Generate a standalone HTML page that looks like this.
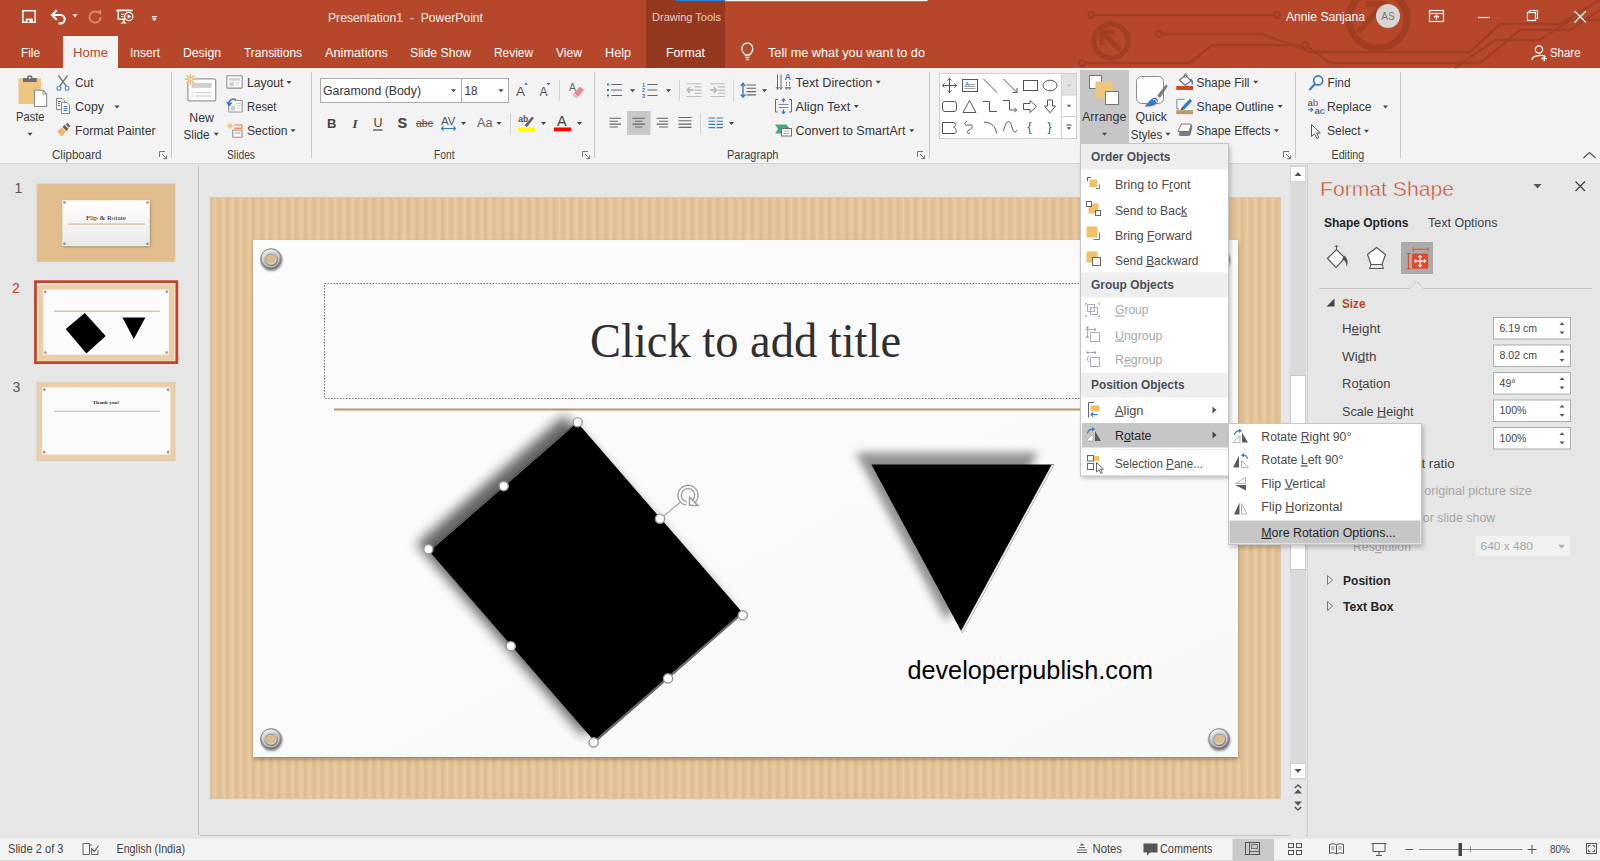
<!DOCTYPE html>
<html><head><meta charset="utf-8"><title>Presentation1 - PowerPoint</title>
<style>
*{box-sizing:border-box;margin:0;padding:0}
html,body{width:1600px;height:861px;overflow:hidden;background:#e6e6e6}
svg{position:absolute;left:0;top:0;display:block;font-family:"Liberation Sans",sans-serif;font-size:12px}
text{white-space:pre}
</style></head><body>
<svg width="1600" height="861" viewBox="0 0 1600 861">
<defs>
<linearGradient id="cardg" x1="0" y1="0" x2="1" y2="0"><stop offset="0" stop-color="#ddba8d"/><stop offset="0.3" stop-color="#e3c298"/><stop offset="0.6" stop-color="#e8cca4"/><stop offset="0.85" stop-color="#e3c298"/><stop offset="1" stop-color="#ddba8d"/></linearGradient>
<pattern id="card" x="210" y="0" width="8.6" height="8" patternUnits="userSpaceOnUse">
<rect width="8.6" height="8" fill="url(#cardg)"/>
</pattern>
<pattern id="cardS" x="0" y="0" width="3" height="3" patternUnits="userSpaceOnUse">
<rect width="3" height="3" fill="#e6c497"/>
</pattern>
<filter id="sh" x="-20%" y="-20%" width="140%" height="140%"><feGaussianBlur stdDeviation="3"/></filter>
<filter id="sh5" x="-30%" y="-30%" width="160%" height="160%"><feGaussianBlur stdDeviation="5"/></filter>
<filter id="sh4" x="-30%" y="-30%" width="160%" height="160%"><feGaussianBlur stdDeviation="4"/></filter>
<filter id="sh6" x="-30%" y="-30%" width="160%" height="160%"><feGaussianBlur stdDeviation="6"/></filter>
<filter id="sh2" x="-20%" y="-20%" width="140%" height="140%"><feGaussianBlur stdDeviation="2"/></filter>
<filter id="sh1" x="-20%" y="-20%" width="140%" height="140%"><feGaussianBlur stdDeviation="1"/></filter>
<linearGradient id="paper" x1="0" y1="0" x2="1" y2="1"><stop offset="0" stop-color="#fcfcfc"/><stop offset="1" stop-color="#f8f8f8"/></linearGradient>
<linearGradient id="grom" x1="0.3" y1="0" x2="0.7" y2="1"><stop offset="0" stop-color="#f4f4f4"/><stop offset="0.45" stop-color="#b4b4b4"/><stop offset="1" stop-color="#6a6a6a"/></linearGradient>
<linearGradient id="grom2" x1="0.3" y1="0" x2="0.7" y2="1"><stop offset="0" stop-color="#8a8a8a"/><stop offset="1" stop-color="#e8e8e8"/></linearGradient>
<linearGradient id="thumbpaper" x1="0" y1="0" x2="0" y2="1"><stop offset="0" stop-color="#ffffff"/><stop offset="1" stop-color="#e9e9e9"/></linearGradient>
</defs>
<rect x="0" y="0" width="1600" height="861" fill="#e6e6e6" />
<rect x="0" y="0" width="1600" height="68" fill="#b7472a" />
<rect x="0" y="68" width="1600" height="95" fill="#f3f3f3" />
<line x1="0" y1="163.5" x2="1600" y2="163.5" stroke="#d4d4d4" stroke-width="1" />
<rect x="0" y="838" width="1600" height="23" fill="#f3f3f3" />
<line x1="0" y1="838" x2="1600" y2="838" stroke="#e0e0e0" stroke-width="1" />
<line x1="198.5" y1="166" x2="198.5" y2="835" stroke="#c3c3c3" stroke-width="1" />
<line x1="200" y1="835.5" x2="1307" y2="835.5" stroke="#c3c3c3" stroke-width="1" />
<line x1="0" y1="860.5" x2="1600" y2="860.5" stroke="#d6d6d6" stroke-width="1" />
<rect x="210.3" y="197.5" width="1070.2" height="601.3" fill="url(#card)" />
<rect x="210.3" y="197.5" width="1070.2" height="601.3" fill="none" stroke="#d4c5ae" stroke-width="0.8" />
<rect x="254" y="243" width="984" height="516" fill="#5a4020" opacity="0.55" filter="url(#sh2)"/>
<rect x="253" y="240" width="985" height="517" fill="url(#paper)" />
<circle cx="271.5" cy="260.2" r="10.9" fill="#000" opacity="0.4" filter="url(#sh1)"/>
<circle cx="271" cy="259" r="10.3" fill="url(#grom)" stroke="#7c7c7c" stroke-width="0.9" />
<circle cx="271" cy="259" r="7.9" fill="none" stroke="#f2f2f2" stroke-width="1.2" opacity="0.55"/>
<circle cx="271" cy="259" r="5.6" fill="url(#grom2)" />
<circle cx="271" cy="259" r="4.5" fill="#dcbb8c" />
<circle cx="1219.5" cy="260.2" r="10.9" fill="#000" opacity="0.4" filter="url(#sh1)"/>
<circle cx="1219" cy="259" r="10.3" fill="url(#grom)" stroke="#7c7c7c" stroke-width="0.9" />
<circle cx="1219" cy="259" r="7.9" fill="none" stroke="#f2f2f2" stroke-width="1.2" opacity="0.55"/>
<circle cx="1219" cy="259" r="5.6" fill="url(#grom2)" />
<circle cx="1219" cy="259" r="4.5" fill="#dcbb8c" />
<circle cx="271.5" cy="740.2" r="10.9" fill="#000" opacity="0.4" filter="url(#sh1)"/>
<circle cx="271" cy="739" r="10.3" fill="url(#grom)" stroke="#7c7c7c" stroke-width="0.9" />
<circle cx="271" cy="739" r="7.9" fill="none" stroke="#f2f2f2" stroke-width="1.2" opacity="0.55"/>
<circle cx="271" cy="739" r="5.6" fill="url(#grom2)" />
<circle cx="271" cy="739" r="4.5" fill="#dcbb8c" />
<circle cx="1219.5" cy="740.2" r="10.9" fill="#000" opacity="0.4" filter="url(#sh1)"/>
<circle cx="1219" cy="739" r="10.3" fill="url(#grom)" stroke="#7c7c7c" stroke-width="0.9" />
<circle cx="1219" cy="739" r="7.9" fill="none" stroke="#f2f2f2" stroke-width="1.2" opacity="0.55"/>
<circle cx="1219" cy="739" r="5.6" fill="url(#grom2)" />
<circle cx="1219" cy="739" r="4.5" fill="#dcbb8c" />
<rect x="324.5" y="283.5" width="842" height="115" fill="none" stroke="#6f6f6f" stroke-width="1" stroke-dasharray="1.5 1.5"/>
<text x="590" y="356.5" font-size="48" fill="#303030" textLength="311" lengthAdjust="spacingAndGlyphs" font-family='"Liberation Serif", serif' >Click to add title</text>
<line x1="334" y1="409.5" x2="1156" y2="409.5" stroke="#b89a6c" stroke-width="2" />
<g transform="translate(586 582) rotate(49)" >
<rect x="-140" y="-93" width="254" height="196" fill="#000" opacity="0.6" filter="url(#sh6)"/>
<rect x="-127" y="-98" width="254" height="196" fill="#000" />
<rect x="-127" y="-98" width="1.3" height="196" fill="#6a6a6a" />
<rect x="125" y="-98" width="2" height="196" fill="#6e6e6e" />
</g>
<line x1="660.7" y1="518.4" x2="680" y2="502.5" stroke="#a0a0a0" stroke-width="1.1" />
<circle cx="577.7" cy="422.2" r="4.6" fill="#fff" stroke="#989898" stroke-width="1.4" />
<circle cx="428.4" cy="549.2" r="4.6" fill="#fff" stroke="#989898" stroke-width="1.4" />
<circle cx="742.8" cy="615.3" r="4.6" fill="#fff" stroke="#989898" stroke-width="1.4" />
<circle cx="593.6" cy="742.4" r="4.6" fill="#fff" stroke="#989898" stroke-width="1.4" />
<circle cx="503.7" cy="486.1" r="4.6" fill="#fff" stroke="#989898" stroke-width="1.4" />
<circle cx="660" cy="518.7" r="4.6" fill="#fff" stroke="#989898" stroke-width="1.4" />
<circle cx="510.8" cy="646.2" r="4.6" fill="#fff" stroke="#989898" stroke-width="1.4" />
<circle cx="668" cy="678.4" r="4.6" fill="#fff" stroke="#989898" stroke-width="1.4" />
<g transform="translate(688 495.3)" >
<path d="M-1.5 8.3 A8.4 8.4 0 1 1 6.3 5.6" fill="none" stroke="#9b9b9b" stroke-width="4.6" />
<path d="M0.8 0.5 L0.8 10.6 L11.6 11 L5.5 4.5 Z" fill="#9b9b9b" />
<path d="M-1.5 8.3 A8.4 8.4 0 1 1 6.3 5.6" fill="none" stroke="#fff" stroke-width="2" />
<path d="M2.2 3.5 L2.2 9.3 L8.3 9.6 Z" fill="#fff" />
</g>
<path d="M871.4 464.5 L1054.2 464.5 L962.3 633.3 Z" fill="#000" opacity="0.42" filter="url(#sh4)" transform="translate(-16 -12)"/>
<path d="M871.4 464.5 L1054.2 464.5 L962.3 633.3 Z" fill="#000" />
<path d="M1054.2 464.5 L962.3 633.3 L961 631 L1051.5 465 Z" fill="#e8e8e8" />
<text x="907.4" y="679.4" font-size="25.5" fill="#000" textLength="245.6" lengthAdjust="spacingAndGlyphs" >developerpublish.com</text>
<g  stroke="#9c3c23" fill="none" stroke-width="2.5" opacity="0.75">
<path d="M1094 15 H1274" fill="none" />
<circle cx="1091" cy="15" r="3" fill="none" />
<circle cx="1277" cy="15" r="3" fill="none" />
<path d="M1162 34 H1262 L1310 52 H1470 L1500 24 H1560 L1600 0" fill="none" />
<circle cx="1159" cy="34" r="3" fill="none" />
<path d="M1085 63 H1190 L1212 45 H1302" fill="none" />
<circle cx="1082" cy="63" r="3" fill="none" />
<circle cx="1305" cy="45" r="3" fill="none" />
<path d="M1308 47 L1330 63 H1480 L1520 30 H1570 L1600 10" fill="none" />
<circle cx="1111" cy="41" r="17" fill="none" stroke-width="5"/>
<path d="M1120 50 L1103 33 M1102 45 V32 H1115" fill="none" stroke-width="5"/>
<circle cx="1378" cy="19" r="29" fill="none" stroke-width="7"/>
<path d="M1366 4 H1384 V22 M1384 4 L1358 32" fill="none" stroke-width="6"/>
<path d="M1455 68 L1495 40 H1540 L1570 20 H1600" fill="none" />
</g>
<rect x="646" y="0" width="79" height="68" fill="#94391f" />
<rect x="676" y="0" width="49" height="1.2" fill="#2b7cd3" />
<rect x="725" y="0" width="202.5" height="1.2" fill="#f3f3f3" />
<text x="652" y="21" font-size="11.5" fill="#eecbbf" textLength="69" lengthAdjust="spacingAndGlyphs" >Drawing Tools</text>
<text x="328" y="21.5" font-size="12.5" fill="#fbeeea" textLength="155" lengthAdjust="spacingAndGlyphs" >Presentation1  -  PowerPoint</text>
<g  stroke="#fff" fill="none" stroke-width="1.6">
<path d="M22.8 10.8 H35.2 V22.2 H22.8 Z" fill="none" />
<rect x="25.8" y="18.6" width="7" height="3.8" fill="#fff" stroke="none"/>
<rect x="27.6" y="19.8" width="1.7" height="2.6" fill="#b7472a" stroke="none"/>
<path d="M52.5 15 H60.5 A4.2 4.2 0 0 1 60.5 23.4 H58.5" fill="none" stroke-width="2.1"/>
<path d="M56.8 10.3 L52 15 L56.8 19.7" fill="none" stroke-width="2.1"/>
</g>
<path d="M72.5 14.2 h5 l-2.5 3 z" fill="#ffffff" />
<g  stroke="#d98670" fill="none" stroke-width="2">
<path d="M100.7 17.3 A5.6 5.6 0 1 1 97.8 12.1" fill="none" />
</g>
<path d="M95.8 12.3 L101 9.2 L101.3 14.9 Z" fill="#d98670" />
<g  stroke="#fff" fill="none" stroke-width="1.4">
<path d="M116.3 10.4 H132.5" fill="none" stroke-width="1.7"/>
<path d="M118.3 10.7 V19.3 H125" fill="none" />
<path d="M121 14.2 H124.5 M121 16.5 H123.5" fill="none" stroke-width="0.9"/>
<path d="M123.7 19.5 V22" fill="none" stroke-width="1.6"/>
<path d="M120.3 23.6 L123.7 21.2 L127 23.6 Z" fill="#fff" stroke="none"/>
<circle cx="128.8" cy="16.5" r="4.1" fill="none" stroke-width="1.2" fill="#b7472a"/>
<path d="M127.6 14.2 V18.8 L131.3 16.5 Z" fill="#fff" stroke="none"/>
</g>
<rect x="151.9" y="16" width="4.8" height="1.3" fill="#ffffff" />
<path d="M151.925 18.175 h4.75 l-2.375 2.8499999999999996 z" fill="#ffffff" />
<text x="1286" y="21" font-size="12.5" fill="#ffffff" textLength="79" lengthAdjust="spacingAndGlyphs" >Annie Sanjana</text>
<circle cx="1388" cy="16" r="12" fill="#d9d5d3" />
<text x="1388" y="20" font-size="10" fill="#767676" text-anchor="middle" >AS</text>
<g  stroke="#fff" fill="none" stroke-width="1.2">
<rect x="1429.5" y="10.5" width="14" height="11" fill="none" />
<line x1="1429.5" y1="13.5" x2="1443.5" y2="13.5" stroke="#ffffff" stroke-width="1.2" />
<path d="M1436.5 20 V15.5 M1434 17.5 L1436.5 15.2 L1439 17.5" fill="none" />
<line x1="1478" y1="17.5" x2="1490" y2="17.5" stroke="#ffffff" stroke-width="1.2" />
<rect x="1527.5" y="12.5" width="8" height="8" fill="none" />
<path d="M1529.5 12.5 V10.5 H1537.5 V18.5 H1535.5" fill="none" />
<path d="M1574.5 11 L1586 22.5 M1586 11 L1574.5 22.5" fill="none" stroke-width="1.3"/>
</g>
<rect x="63" y="36" width="55" height="32" fill="#f3f3f3" />
<text x="21" y="56.5" font-size="12.5" fill="#ffffff" textLength="19" lengthAdjust="spacingAndGlyphs" >File</text>
<text x="130" y="56.5" font-size="12.5" fill="#ffffff" textLength="30" lengthAdjust="spacingAndGlyphs" >Insert</text>
<text x="183" y="56.5" font-size="12.5" fill="#ffffff" textLength="38" lengthAdjust="spacingAndGlyphs" >Design</text>
<text x="244" y="56.5" font-size="12.5" fill="#ffffff" textLength="58" lengthAdjust="spacingAndGlyphs" >Transitions</text>
<text x="325" y="56.5" font-size="12.5" fill="#ffffff" textLength="63" lengthAdjust="spacingAndGlyphs" >Animations</text>
<text x="410" y="56.5" font-size="12.5" fill="#ffffff" textLength="61" lengthAdjust="spacingAndGlyphs" >Slide Show</text>
<text x="494" y="56.5" font-size="12.5" fill="#ffffff" textLength="39" lengthAdjust="spacingAndGlyphs" >Review</text>
<text x="556" y="56.5" font-size="12.5" fill="#ffffff" textLength="26" lengthAdjust="spacingAndGlyphs" >View</text>
<text x="605" y="56.5" font-size="12.5" fill="#ffffff" textLength="26" lengthAdjust="spacingAndGlyphs" >Help</text>
<text x="666" y="56.5" font-size="12.5" fill="#ffffff" textLength="39" lengthAdjust="spacingAndGlyphs" >Format</text>
<text x="768" y="56.5" font-size="12.5" fill="#ffffff" textLength="157" lengthAdjust="spacingAndGlyphs" >Tell me what you want to do</text>
<text x="73" y="56.5" font-size="12.5" fill="#b7472a" textLength="35" lengthAdjust="spacingAndGlyphs" >Home</text>
<g  stroke="#fff" fill="none" stroke-width="1.3">
<path d="M745.3 55 C742 52 741.5 49.5 742 47.5 A5.4 5.4 0 0 1 752.6 47.5 C753 49.5 752.5 52 749.3 55 Z" fill="none" />
<path d="M745.3 57.3 H749.3 M746 59.5 H748.6" fill="none" />
</g>
<g  stroke="#fff" fill="none" stroke-width="1.3">
<circle cx="1539" cy="49.5" r="3.6" fill="none" />
<path d="M1532 60 C1532 54.5 1546 54.5 1545 57" fill="none" />
<path d="M1541.5 58.5 H1547 M1544.2 55.8 V61.3" fill="none" />
</g>
<text x="1550" y="57" font-size="12.5" fill="#ffffff" textLength="30.5" lengthAdjust="spacingAndGlyphs" >Share</text>
<line x1="171.5" y1="72" x2="171.5" y2="158" stroke="#c6c6c6" stroke-width="1" />
<line x1="311.5" y1="72" x2="311.5" y2="158" stroke="#c6c6c6" stroke-width="1" />
<line x1="594.5" y1="72" x2="594.5" y2="158" stroke="#c6c6c6" stroke-width="1" />
<line x1="929.5" y1="72" x2="929.5" y2="158" stroke="#c6c6c6" stroke-width="1" />
<line x1="1295.5" y1="72" x2="1295.5" y2="158" stroke="#c6c6c6" stroke-width="1" />
<line x1="1400.5" y1="72" x2="1400.5" y2="158" stroke="#c6c6c6" stroke-width="1" />
<rect x="18.5" y="78.3" width="22.5" height="25.7" fill="#efc67f" rx="1" />
<path d="M23 82 V78 H27 A2.8 2.8 0 0 1 32.6 78 H36.8 V82 Z" fill="#6e6e6e" />
<circle cx="29.8" cy="77.8" r="1.1" fill="#f3f3f3" />
<path d="M34.5 90.3 H43 L46.6 94 V106.5 H34.5 Z" fill="#fff" stroke="#8a8a8a" stroke-width="1.1" />
<path d="M43 90.3 V94 H46.6" fill="none" stroke="#8a8a8a" stroke-width="0.9" />
<text x="16" y="121.4" font-size="12" fill="#363636" textLength="28.5" lengthAdjust="spacingAndGlyphs" >Paste</text>
<path d="M27.5 132.7 h5 l-2.5 3 z" fill="#444" />
<g  fill="none">
<path d="M58.5 75.5 L66.5 86.5 M67.5 75.5 L59.5 86.5" fill="none" stroke="#7a7a7a" stroke-width="1.3" />
<circle cx="58.9" cy="88.2" r="2" fill="none" stroke="#5b8fd0" stroke-width="1.1" />
<circle cx="67.1" cy="88.2" r="2" fill="none" stroke="#5b8fd0" stroke-width="1.1" />
</g>
<text x="75" y="86.5" font-size="12" fill="#363636" textLength="18.5" lengthAdjust="spacingAndGlyphs" >Cut</text>
<path d="M56.5 98.5 H62 L64.5 101 V109.5 H56.5 Z" fill="#fff" stroke="#8a8a8a" stroke-width="1" />
<path d="M61.5 102.5 H67 L69.5 105 V113.5 H61.5 Z" fill="#fff" stroke="#8a8a8a" stroke-width="1" />
<path d="M58 101.5 H61 M58 103.5 H60 M58 105.5 H60 M63.5 106.5 H67.5 M63.5 108.5 H67.5 M63.5 110.5 H67.5" fill="none" stroke="#3b78c3" stroke-width="1" />
<text x="75" y="110.7" font-size="12" fill="#363636" textLength="29" lengthAdjust="spacingAndGlyphs" >Copy</text>
<path d="M114.5 105.5 h5 l-2.5 3 z" fill="#444" />
<path d="M57 131.5 L62 127.5 L66 131.5 L61.5 136.5 Z" fill="#e9b96a" />
<path d="M62.5 127 L64.5 125 L68.5 129 L66.5 131 Z" fill="#6b5a45" />
<path d="M65.5 124.5 L67.5 122.8 L70.5 126 L68.8 127.8 Z" fill="#6e6e6e" />
<text x="75" y="134.9" font-size="12" fill="#363636" textLength="80.5" lengthAdjust="spacingAndGlyphs" >Format Painter</text>
<text x="52" y="158.7" font-size="12" fill="#444" textLength="49.5" lengthAdjust="spacingAndGlyphs" >Clipboard</text>
<path d="M159.5 157.0 V151.5 H165.0" fill="none" stroke="#777" stroke-width="1" />
<path d="M162.0 154.0 L166.5 158.5 M163.3 158.7 H166.7 V155.3" fill="none" stroke="#777" stroke-width="1" />
<rect x="187.9" y="78.9" width="27.8" height="22" fill="#fff" stroke="#9c9c9c" stroke-width="1.3" rx="2" />
<rect x="191.5" y="83" width="20" height="4.8" fill="#cfcfcf" />
<path d="M191.5 92.7 H193 M195 92.7 H211.5 M191.5 96 H193 M195 96 H211.5" fill="none" stroke="#c4c4c4" stroke-width="1" />
<circle cx="190.4" cy="79.2" r="3.4" fill="#f3f3f3" />
<g  stroke="#ecb45f" stroke-width="1.2">
<path d="M190.4 73.8 V84.6 M185 79.2 H195.8 M186.6 75.4 L194.2 83 M194.2 75.4 L186.6 83" fill="none" />
</g>
<circle cx="190.4" cy="79.2" r="1.7" fill="#fff" stroke="#ecb45f" stroke-width="0.9" />
<text x="189.3" y="121.5" font-size="12" fill="#363636" textLength="24.6" lengthAdjust="spacingAndGlyphs" >New</text>
<text x="183.5" y="138.6" font-size="12" fill="#363636" textLength="26" lengthAdjust="spacingAndGlyphs" >Slide</text>
<path d="M213.8 132.7 h5 l-2.5 3 z" fill="#444" />
<rect x="226.8" y="75.7" width="15.4" height="12.4" fill="#fff" stroke="#8e8e8e" stroke-width="1.1" rx="0.8" />
<rect x="229.3" y="78.2" width="10.5" height="2.5" fill="#cdcdcd" />
<rect x="229.3" y="82.2" width="4.5" height="4" fill="#cdcdcd" />
<path d="M235.5 82.8 H239.8 M235.5 84.8 H238.5" fill="none" stroke="#c4c4c4" stroke-width="0.9" />
<text x="247" y="86.5" font-size="12" fill="#363636" textLength="36.5" lengthAdjust="spacingAndGlyphs" >Layout</text>
<path d="M286.5 81.0 h5 l-2.5 3 z" fill="#444" />
<rect x="228.7" y="100.5" width="13.5" height="11.5" fill="#fff" stroke="#8e8e8e" stroke-width="1.1" rx="0.8" />
<rect x="231" y="105.5" width="4" height="5" fill="#cdcdcd" />
<path d="M236.5 103.5 H240.5 M236.5 105.8 H240.5 M236.5 108 H239.5" fill="none" stroke="#c4c4c4" stroke-width="0.9" />
<path d="M229.3 104.5 A4 4 0 0 1 236.3 100.8" fill="none" stroke="#f3f3f3" stroke-width="3.4" />
<path d="M229.3 104.5 A4 4 0 0 1 236.3 100.8" fill="none" stroke="#3b78c3" stroke-width="1.6" />
<path d="M226 102 L229 106.8 L232.5 102.8 Z" fill="#3b78c3" />
<text x="247" y="110.7" font-size="12" fill="#363636" textLength="29.5" lengthAdjust="spacingAndGlyphs" >Reset</text>
<rect x="232.7" y="130" width="9.3" height="7.3" fill="#fff" stroke="#8e8e8e" stroke-width="1.1" rx="0.6" />
<rect x="234.5" y="131.5" width="5.8" height="2.6" fill="#cdcdcd" />
<path d="M234.5 124.9 H241.8 V128.2 H234.5" fill="none" stroke="#ee9454" stroke-width="1.4" />
<g  stroke="#ecb45f" stroke-width="0.9">
<path d="M230 122.600 V129 M226.8 125.800 H233.2 M227.7 123.500 L232.3 128.1 M232.3 123.500 L227.7 128.1" fill="none" />
</g>
<text x="247" y="134.9" font-size="12" fill="#363636" textLength="40.5" lengthAdjust="spacingAndGlyphs" >Section</text>
<path d="M290.5 129.3 h5 l-2.5 3 z" fill="#444" />
<text x="227" y="158.7" font-size="12" fill="#444" textLength="28" lengthAdjust="spacingAndGlyphs" >Slides</text>
<rect x="320.5" y="78.5" width="141" height="24" fill="#fff" stroke="#ababab" stroke-width="1" />
<rect x="461.5" y="78.5" width="47" height="24" fill="#fff" stroke="#ababab" stroke-width="1" />
<text x="323" y="94.6" font-size="12.5" fill="#363636" textLength="98" lengthAdjust="spacingAndGlyphs" >Garamond (Body)</text>
<path d="M451.0 89.3 h5 l-2.5 3 z" fill="#444" />
<text x="464.5" y="94.6" font-size="12.5" fill="#363636" textLength="13" lengthAdjust="spacingAndGlyphs" >18</text>
<path d="M498.5 89.3 h5 l-2.5 3 z" fill="#444" />
<text x="516" y="95.5" font-size="13.5" fill="#555" >A</text>
<path d="M524 84.8 L526 82.6 L528 84.8 Z" fill="#3b78c3" />
<text x="539.5" y="95.5" font-size="12" fill="#555" >A</text>
<path d="M546.5 83 L548.5 85.2 L550.5 83 Z" fill="#3b78c3" />
<line x1="559.5" y1="80" x2="559.5" y2="101" stroke="#d4d4d4" stroke-width="1" />
<text x="569" y="91" font-size="10.5" fill="#666" >A</text>
<path d="M574 93 L580 86.5 L584 90 L578 97 Z" fill="#e98a9a" />
<path d="M572 95 L574 93 L578 97 L576.3 98.5 Z" fill="#f3b9c2" />
<text x="327" y="127.5" font-size="13" fill="#444" font-weight="bold" >B</text>
<text x="352.5" y="127.5" font-size="13" fill="#444" font-weight="bold" font-family='"Liberation Serif", serif' font-style="italic" >I</text>
<text x="373.5" y="127" font-size="12.5" fill="#444" >U</text>
<line x1="373" y1="130" x2="382.5" y2="130" stroke="#444" stroke-width="1.2" />
<text x="398.3" y="128.3" font-size="14" fill="#aaa" font-weight="bold" >S</text>
<text x="397.5" y="127.5" font-size="14" fill="#444" font-weight="bold" >S</text>
<text x="416" y="127" font-size="10.5" fill="#555" textLength="17" lengthAdjust="spacingAndGlyphs" >abc</text>
<line x1="416" y1="123.5" x2="433.5" y2="123.5" stroke="#555" stroke-width="1" />
<text x="441" y="125" font-size="11" fill="#555" textLength="14.5" lengthAdjust="spacingAndGlyphs" >AV</text>
<path d="M441.5 128.5 H455.5 M443.5 126.5 L441.5 128.5 L443.5 130.5 M453.5 126.5 L455.5 128.5 L453.5 130.5" fill="none" stroke="#3b78c3" stroke-width="1.1" />
<path d="M461.0 122.0 h5 l-2.5 3 z" fill="#444" />
<text x="477" y="127.3" font-size="12.5" fill="#666" textLength="15.5" lengthAdjust="spacingAndGlyphs" >Aa</text>
<path d="M496.5 122.0 h5 l-2.5 3 z" fill="#444" />
<line x1="510.5" y1="113" x2="510.5" y2="134" stroke="#d4d4d4" stroke-width="1" />
<text x="518.3" y="122.3" font-size="9.5" fill="#555" textLength="10" lengthAdjust="spacingAndGlyphs" font-weight="bold" >ab</text>
<path d="M524.5 125.5 L532 116.5 L534 118 L527 127 Z" fill="#666" />
<rect x="518" y="127.5" width="17" height="3.8" fill="#ffff00" />
<path d="M541.0 122.0 h5 l-2.5 3 z" fill="#444" />
<text x="557" y="126" font-size="14.5" fill="#444" >A</text>
<rect x="554" y="127.5" width="17" height="3.8" fill="#ff0000" />
<path d="M577.0 122.0 h5 l-2.5 3 z" fill="#444" />
<text x="434" y="158.7" font-size="12" fill="#444" textLength="20.5" lengthAdjust="spacingAndGlyphs" >Font</text>
<path d="M582.5 157.0 V151.5 H588.0" fill="none" stroke="#777" stroke-width="1" />
<path d="M585.0 154.0 L589.5 158.5 M586.3 158.7 H589.7 V155.3" fill="none" stroke="#777" stroke-width="1" />
<rect x="607" y="83.5" width="2" height="2" fill="#3b78c3" />
<rect x="607" y="89.0" width="2" height="2" fill="#3b78c3" />
<rect x="607" y="94.5" width="2" height="2" fill="#3b78c3" />
<path d="M611.5 84.5 h10.5 M611.5 90.0 h10.5 M611.5 95.5 h10.5 " fill="none" stroke="#666" stroke-width="1.1" />
<path d="M630.0 89.3 h5 l-2.5 3 z" fill="#444" />
<text x="642" y="86.7" font-size="5.5" fill="#3b78c3" font-weight="bold" >1</text>
<text x="642" y="92.2" font-size="5.5" fill="#3b78c3" font-weight="bold" >2</text>
<text x="642" y="97.7" font-size="5.5" fill="#3b78c3" font-weight="bold" >3</text>
<path d="M647.5 84.5 h10 M647.5 90.0 h10 M647.5 95.5 h10 " fill="none" stroke="#666" stroke-width="1.1" />
<path d="M666.0 89.3 h5 l-2.5 3 z" fill="#444" />
<line x1="679.5" y1="80" x2="679.5" y2="101" stroke="#d4d4d4" stroke-width="1" />
<path d="M686.5 83.7 h15 M694.5 86.9 h7 M694.5 90.10000000000001 h7 M694.5 93.30000000000001 h7 M686.5 96.5 h15 " fill="none" stroke="#bdbdbd" stroke-width="1.1" />
<path d="M693.5 90.1 H687.3 M690 87.3 L687.2 90.1 L690 92.900" fill="none" stroke="#b4b4b4" stroke-width="1.5" />
<path d="M710 83.7 h15 M718 86.9 h7 M718 90.10000000000001 h7 M718 93.30000000000001 h7 M710 96.5 h15 " fill="none" stroke="#bdbdbd" stroke-width="1.1" />
<path d="M710.3 90.1 H716.500 M713.8 87.3 L716.600 90.1 L713.800 92.900" fill="none" stroke="#b4b4b4" stroke-width="1.5" />
<line x1="733.5" y1="80" x2="733.5" y2="101" stroke="#d4d4d4" stroke-width="1" />
<path d="M746.5 85.0 h9.5 M746.5 88.3 h9.5 M746.5 91.6 h9.5 M746.5 94.9 h9.5 " fill="none" stroke="#666" stroke-width="1.1" />
<path d="M743 83.5 V97 M740.7 86 L743 83.4 L745.3 86 M740.7 94.5 L743 97.1 L745.3 94.5" fill="none" stroke="#3b78c3" stroke-width="1.4" />
<path d="M762.0 89.3 h5 l-2.5 3 z" fill="#444" />
<path d="M609.5 118.3 h11.5 M609.5 121.2 h8.5 M609.5 124.1 h11.5 M609.5 127.0 h8.5 " fill="none" stroke="#666" stroke-width="1.1" />
<rect x="627" y="111" width="23.5" height="24" fill="#c8c8c8" />
<path d="M632.5 118.3 h12.5 M635.0 121.2 h7.5 M632.5 124.1 h12.5 M635.0 127.0 h7.5 " fill="none" stroke="#666" stroke-width="1.1" />
<path d="M656.5 118.3 h11.5 M659.0 121.2 h9 M656.5 124.1 h11.5 M659.0 127.0 h9 " fill="none" stroke="#666" stroke-width="1.1" />
<path d="M678.5 117.5 h13 M678.5 120.8 h13 M678.5 124.1 h13 M678.5 127.4 h13 " fill="none" stroke="#666" stroke-width="1.1" />
<line x1="700.5" y1="113" x2="700.5" y2="134" stroke="#d4d4d4" stroke-width="1" />
<path d="M708.5 118.0 h6.5 M708.5 121.2 h6.5 M708.5 124.4 h6.5 M708.5 127.6 h6.5 " fill="none" stroke="#3b78c3" stroke-width="1.1" />
<path d="M716.5 118.0 h6.5 M716.5 121.2 h6.5 M716.5 124.4 h6.5 M716.5 127.6 h6.5 " fill="none" stroke="#3b78c3" stroke-width="1.1" />
<path d="M729.0 122.0 h5 l-2.5 3 z" fill="#444" />
<path d="M777.5 74.5 V89 M781 74.5 V89" fill="none" stroke="#6a6a6a" stroke-width="1" />
<path d="M776 87 L777.5 89.5 L779 87 M779.5 87 L781 89.5 L782.5 87 M785 87 L786.5 89.5 L788 87 M788 87 L789.5 89.5 L791 87" fill="none" stroke="#6a6a6a" stroke-width="0.8" />
<path d="M786.5 82 V89 M789.5 82 V89" fill="none" stroke="#6a6a6a" stroke-width="1" stroke-dasharray="1.5 1"/>
<text x="784.6" y="80.3" font-size="9" fill="#3b78c3" font-weight="bold" >A</text>
<text x="795.6" y="86.5" font-size="12" fill="#363636" textLength="76.8" lengthAdjust="spacingAndGlyphs" >Text Direction</text>
<path d="M875.7 80.8 h5 l-2.5 3 z" fill="#444" />
<path d="M778 99.5 H775.5 V112 H778 M789 99.5 H791.5 V112 H789" fill="none" stroke="#6a6a6a" stroke-width="1" />
<path d="M778.5 104.5 H788.5 M778.5 107.5 H788.5" fill="none" stroke="#8a8a8a" stroke-width="1" />
<path d="M783.5 99 V102.5 M781.7 100.7 L783.5 98.8 L785.3 100.7 M783.5 109.5 V113.3 M781.7 111.6 L783.5 113.5 L785.3 111.6" fill="none" stroke="#3b78c3" stroke-width="1.2" />
<text x="795.6" y="110.7" font-size="12" fill="#363636" textLength="54.6" lengthAdjust="spacingAndGlyphs" >Align Text</text>
<path d="M853.8 105.0 h5 l-2.5 3 z" fill="#444" />
<path d="M775 124.6 H786.5 L789.4 128.3 L787 133.6 H775 L778 129 Z" fill="#4ea585" />
<rect x="781.5" y="128.5" width="10" height="7.5" fill="#fff" stroke="#6a6a6a" stroke-width="1" />
<path d="M783.5 131 H789.5 M783.5 133.5 H789.5" fill="none" stroke="#a0a0a0" stroke-width="0.9" />
<text x="795.6" y="134.9" font-size="12" fill="#363636" textLength="109.8" lengthAdjust="spacingAndGlyphs" >Convert to SmartArt</text>
<path d="M909.3 129.3 h5 l-2.5 3 z" fill="#444" />
<text x="727" y="158.7" font-size="12" fill="#444" textLength="51.5" lengthAdjust="spacingAndGlyphs" >Paragraph</text>
<path d="M917.5 157.0 V151.5 H923.0" fill="none" stroke="#777" stroke-width="1" />
<path d="M920.0 154.0 L924.5 158.5 M921.3 158.7 H924.7 V155.3" fill="none" stroke="#777" stroke-width="1" />
<rect x="939.5" y="73.5" width="137" height="65" fill="#fff" stroke="#d0d0d0" stroke-width="1" />
<rect x="1061.5" y="73.5" width="15" height="21.5" fill="#e2e2e2" stroke="#d0d0d0" stroke-width="1" />
<line x1="1061.5" y1="95" x2="1061.5" y2="138.5" stroke="#d0d0d0" stroke-width="1" />
<line x1="1061.5" y1="116.5" x2="1076.5" y2="116.5" stroke="#d0d0d0" stroke-width="1" />
<path d="M1067 86 L1069 83.5 L1071 86 Z" fill="#c0c0c0" />
<path d="M1066.75 104.65 h4.5 l-2.25 2.7 z" fill="#555" />
<rect x="1066.5" y="124.5" width="5" height="1.1" fill="#555" />
<path d="M1066.75 127.15 h4.5 l-2.25 2.7 z" fill="#555" />
<g  stroke="#555" fill="none" stroke-width="1">
<path d="M949.5 78.5 V92.5 M942.5 85.5 H956.5 M947.5 80.5 L949.5 78.3 L951.5 80.5 M947.5 90.5 L949.5 92.7 L951.5 90.5 M944.5 83.5 L942.3 85.5 L944.5 87.5 M954.5 83.5 L956.7 85.5 L954.5 87.5" fill="none" />
<rect x="962.5" y="79.5" width="15" height="12" fill="none" />
<path d="M968.5 84.5 H975.5 M964.5 86.5 H975.5 M964.5 88.5 H975.5" fill="none" stroke-width="0.8" stroke="#888"/>
<path d="M983.5 79 L997 92.5" fill="none" />
<path d="M1003.5 79 L1017 92.5 M1017 88 V92.5 H1012.5" fill="none" />
<rect x="1023.5" y="80.5" width="14" height="10" fill="none" />
<ellipse cx="1050" cy="85.5" rx="7" ry="5.3"/>
<rect x="942.5" y="101.5" width="14" height="10" fill="none" rx="2.5" />
<path d="M969.5 100.5 L976 112.5 H963 Z" fill="none" />
<path d="M983 101.5 H989.5 V111.5 H997" fill="none" />
<path d="M1003 100.5 H1009.5 V110 H1016.5 M1014.5 107.8 L1016.7 110 L1014.5 112.2" fill="none" />
<path d="M1023.5 103.5 H1030 V100.5 L1036.5 106.5 L1030 112.5 V109.5 H1023.5 Z" fill="none" />
<path d="M1047.5 100 H1052.5 V106 H1055.5 L1050 112.8 L1044.500 106 H1047.5 Z" fill="none" />
<path d="M942.5 122.5 H953 C956.5 123 956.5 126 953.5 127 C956 128 957.500 132.5 955 133.5 H942.5 Z" fill="none" />
<path d="M967 121 C963 124 965 126 969 125 C973 124 974 128 969 130 C966 131.5 967 134 970 133" fill="none" />
<path d="M984 122 C992 122.5 996 127 996.5 133.500" fill="none" />
<path d="M1003.5 131 C1006.5 119 1010 119 1012 127 C1013.5 133 1015.5 133 1017 130" fill="none" />
</g>
<text x="1027.5" y="131" font-size="12.5" fill="#555" >{</text>
<text x="1047.5" y="131" font-size="12.5" fill="#555" >}</text>
<text x="965" y="85.5" font-size="5.5" fill="#3b78c3" font-weight="bold" >A</text>
<rect x="1080" y="70" width="49" height="74" fill="#c6c6c6" />
<rect x="1089.5" y="75.5" width="12" height="13" fill="#fff" stroke="#777" stroke-width="1" />
<rect x="1095.5" y="81.5" width="17" height="17" fill="#efc67f" />
<rect x="1105.5" y="91.5" width="13" height="13" fill="#fff" stroke="#777" stroke-width="1" />
<text x="1082" y="121.4" font-size="12" fill="#363636" textLength="44.5" lengthAdjust="spacingAndGlyphs" >Arrange</text>
<path d="M1102.0 132.7 h5 l-2.5 3 z" fill="#444" />
<rect x="1136.5" y="76.5" width="27" height="27" fill="#fff" stroke="#8a8a8a" stroke-width="1" rx="5" />
<path d="M1157.3 95.5 L1166 84.5 L1167.8 86 L1160 98 Z" fill="#7a7a7a" />
<path d="M1144.7 106.5 C1149 102 1151 97.5 1156 97.8 C1160 99.5 1158 105.5 1150 106.5 Z" fill="#3b78c3" />
<path d="M1153 100 C1155 99 1157 100 1156.5 102.5" fill="none" stroke="#fff" stroke-width="1" />
<text x="1135.5" y="121.3" font-size="12" fill="#363636" textLength="31.5" lengthAdjust="spacingAndGlyphs" >Quick</text>
<text x="1130.8" y="138.5" font-size="12" fill="#363636" textLength="31.4" lengthAdjust="spacingAndGlyphs" >Styles</text>
<path d="M1165.5 132.7 h5 l-2.5 3 z" fill="#444" />
<path d="M1179.5 80 L1185.5 75.2 L1191 81 L1185 85.3 Z" fill="#fff" stroke="#6a6a6a" stroke-width="1.1" />
<path d="M1185.3 78.5 C1183.5 75 1184.5 73.2 1186 73.6 C1187.3 74 1187.2 76 1186.5 77.5" fill="none" stroke="#6a6a6a" stroke-width="0.9" />
<path d="M1190.5 79 C1192.3 80.5 1192.8 82.5 1192 84.5" fill="none" stroke="#3b78c3" stroke-width="1.5" />
<rect x="1176.3" y="86" width="16.7" height="4" fill="#c9492c" />
<text x="1196.5" y="86.5" font-size="12" fill="#363636" textLength="53" lengthAdjust="spacingAndGlyphs" >Shape Fill</text>
<path d="M1253.2 80.8 h5 l-2.5 3 z" fill="#444" />
<path d="M1184.5 99.3 H1176.8 V109 H1179" fill="none" stroke="#8c8c8c" stroke-width="1" />
<path d="M1181.8 107.2 L1189.8 98.8 L1192.2 101 L1184.2 109.5 Z" fill="#3b78c3" />
<path d="M1180.3 110.8 L1181.8 107.2 L1184.2 109.5 Z" fill="#555" />
<rect x="1176.3" y="110.2" width="16.7" height="4" fill="#b99b6b" />
<text x="1196.5" y="110.7" font-size="12" fill="#363636" textLength="77.3" lengthAdjust="spacingAndGlyphs" >Shape Outline</text>
<path d="M1277.7 105.0 h5 l-2.5 3 z" fill="#444" />
<path d="M1179 133.5 L1181.500 124.3 H1190 Q1192.5 124.3 1192.3 127 L1191 133.5 Q1190.5 136 1188 136 H1180.500 Q1178.3 136 1179 133.500 Z" fill="#7d7d7d" />
<path d="M1178 131.5 L1181.3 124 H1189.5 Q1191.5 124 1191 126 L1188.8 131.500 Z" fill="#fff" stroke="#6a6a6a" stroke-width="0.9" />
<text x="1196.5" y="134.9" font-size="12" fill="#363636" textLength="74" lengthAdjust="spacingAndGlyphs" >Shape Effects</text>
<path d="M1273.9 129.3 h5 l-2.5 3 z" fill="#444" />
<path d="M1283.5 157.0 V151.5 H1289.0" fill="none" stroke="#777" stroke-width="1" />
<path d="M1286.0 154.0 L1290.5 158.5 M1287.3 158.7 H1290.7 V155.3" fill="none" stroke="#777" stroke-width="1" />
<circle cx="1318.2" cy="80.4" r="4.5" fill="none" stroke="#3b78c3" stroke-width="1.6" />
<path d="M1315 84 L1309.3 90" fill="none" stroke="#3b78c3" stroke-width="2.1" />
<text x="1327.5" y="86.5" font-size="12" fill="#363636" textLength="23" lengthAdjust="spacingAndGlyphs" >Find</text>
<text x="1307.6" y="105.6" font-size="9.5" fill="#666" font-weight="bold" >a</text>
<text x="1312.8" y="105.6" font-size="9.5" fill="#a874c0" font-weight="bold" >b</text>
<text x="1314.5" y="113.6" font-size="9.5" fill="#666" font-weight="bold" >a</text>
<text x="1319.6" y="113.6" font-size="9.5" fill="#4a86c8" font-weight="bold" >c</text>
<path d="M1308 109.8 H1312.5 M1310.6 107.8 L1312.8 109.8 L1310.600 111.800" fill="none" stroke="#3b78c3" stroke-width="1.1" />
<text x="1327" y="110.7" font-size="12" fill="#363636" textLength="44.5" lengthAdjust="spacingAndGlyphs" >Replace</text>
<path d="M1383.0 105.5 h5 l-2.5 3 z" fill="#444" />
<path d="M1311.500 124.500 V136.500 L1314.500 133.800 L1317 138.5 L1318.800 137.5 L1316.500 133 H1320.300 Z" fill="#fff" stroke="#555" stroke-width="1" />
<text x="1327" y="134.9" font-size="12" fill="#363636" textLength="33.5" lengthAdjust="spacingAndGlyphs" >Select</text>
<path d="M1364.0 129.8 h5 l-2.5 3 z" fill="#444" />
<text x="1331.5" y="158.7" font-size="12" fill="#444" textLength="32.7" lengthAdjust="spacingAndGlyphs" >Editing</text>
<path d="M1583.5 158 L1589.5 152.5 L1595.5 158" fill="none" stroke="#555" stroke-width="1.2" />
<rect x="1290" y="165" width="16" height="622" fill="#dadada" />
<rect x="1290.5" y="166.5" width="15" height="15" fill="#fff" stroke="#d3d3d3" stroke-width="1" />
<path d="M1294.5 176 L1298 172 L1301.5 176 Z" fill="#555" />
<rect x="1290.5" y="375.5" width="15" height="194" fill="#fff" stroke="#c8c8c8" stroke-width="1" />
<rect x="1290.5" y="763.5" width="15" height="15" fill="#fff" stroke="#d3d3d3" stroke-width="1" />
<path d="M1294.5 769 L1298 773 L1301.5 769 Z" fill="#555" />
<rect x="1290" y="780" width="16" height="58" fill="#e6e6e6" />
<g  stroke="#555" fill="none" stroke-width="1.5">
<path d="M1294.8 788 L1298 785 L1301.2 788" fill="none" />
<path d="M1294.8 807 L1298 810 L1301.2 807" fill="none" />
</g>
<path d="M1294 793.5 L1298 789.3 L1302 793.5 Z" fill="#555" />
<path d="M1294 801.5 L1298 805.7 L1302 801.5 Z" fill="#555" />
<line x1="1307.5" y1="164" x2="1307.5" y2="838" stroke="#cfcfcf" stroke-width="1" />
<text x="1320" y="195.5" font-size="21" fill="#c24d2f" textLength="134" lengthAdjust="spacingAndGlyphs" stroke="#e6e6e6" stroke-width="0.45">Format Shape</text>
<path d="M1533.5 184 H1541.5 L1537.5 188.500 Z" fill="#555" />
<path d="M1575.5 181.500 L1585 191 M1585 181.500 L1575.500 191" fill="none" stroke="#444" stroke-width="1.3" />
<text x="1324" y="227" font-size="12" fill="#262626" textLength="84.5" lengthAdjust="spacingAndGlyphs" font-weight="bold" >Shape Options</text>
<text x="1428" y="227" font-size="12" fill="#444" textLength="69.5" lengthAdjust="spacingAndGlyphs" >Text Options</text>
<path d="M1327.5 258.5 L1336.5 249.5 L1345 258 L1336 267.500 Z" fill="#fff" stroke="#555" stroke-width="1.2" />
<path d="M1336.5 249.5 V245.500 M1334.800 247 A1.8 1.8 0 0 1 1338.2 247" fill="none" stroke="#555" stroke-width="1" />
<path d="M1344 255.500 C1348 258 1348.500 263 1346.5 266.500 C1346 262 1345 260 1342 259.500 Z" fill="#555" />
<path d="M1376.5 247.500 L1385.500 254.500 L1382 264.500 H1371 L1367.500 254.500 Z" fill="#fff" stroke="#555" stroke-width="1.2" />
<path d="M1371 264.500 L1369.500 268.5 H1383.500 L1382 264.500" fill="none" stroke="#555" stroke-width="1" />
<rect x="1401" y="242" width="32" height="32" fill="#ababab" />
<rect x="1412" y="253.4" width="16.2" height="15.4" fill="#de4b2d" rx="1.5" />
<path d="M1408.4 253.5 V268.8 M1406.4 253.5 H1410.4 M1406.4 268.8 H1410.4" fill="none" stroke="#de4b2d" stroke-width="1.1" />
<path d="M1413 249.2 H1428 M1413 247.2 V251.2 M1428 247.2 V251.2" fill="none" stroke="#de4b2d" stroke-width="1.1" />
<path d="M1420.1 255.5 V266.7 M1414.5 261.1 H1425.7 M1418.5 257.2 L1420.1 255.5 L1421.7 257.2 M1418.5 265 L1420.1 266.7 L1421.7 265 M1416.2 259.500 L1414.5 261.1 L1416.2 262.700 M1424 259.500 L1425.7 261.1 L1424 262.700" fill="none" stroke="#fff" stroke-width="1.1" />
<path d="M1319 288.5 H1409.500 L1416.5 281 L1423.500 288.500 H1592" fill="none" stroke="#c6c6c6" stroke-width="1" />
<path d="M1334.5 298.500 V306.5 H1326.500 Z" fill="#444" />
<text x="1342" y="307.5" font-size="12" fill="#b7472a" textLength="23.5" lengthAdjust="spacingAndGlyphs" font-weight="bold" >Size</text>
<text x="1342" y="333" font-size="12" fill="#444" textLength="38.5" lengthAdjust="spacingAndGlyphs" >H<tspan text-decoration="underline">e</tspan>ight</text>
<text x="1342" y="360.5" font-size="12" fill="#444" textLength="34.5" lengthAdjust="spacingAndGlyphs" >Wi<tspan text-decoration="underline">d</tspan>th</text>
<text x="1342" y="388" font-size="12" fill="#444" textLength="48.5" lengthAdjust="spacingAndGlyphs" >Ro<tspan text-decoration="underline">t</tspan>ation</text>
<text x="1342" y="415.5" font-size="12" fill="#444" textLength="71.5" lengthAdjust="spacingAndGlyphs" >Scale <tspan text-decoration="underline">H</tspan>eight</text>
<text x="1342" y="443" font-size="12" fill="#444" textLength="67" lengthAdjust="spacingAndGlyphs" >Scale <tspan text-decoration="underline">W</tspan>idth</text>
<rect x="1493.5" y="317.5" width="77" height="21.5" fill="#fff" stroke="#ababab" stroke-width="1" />
<text x="1499.5" y="331.8" font-size="10.5" fill="#444" textLength="37.5" lengthAdjust="spacingAndGlyphs" >6.19 cm</text>
<path d="M1559.5 325.0 L1562 322.3 L1564.500 325.0 Z" fill="#555" />
<path d="M1559.5 331.5 L1562 334.2 L1564.500 331.5 Z" fill="#555" />
<rect x="1493.5" y="345" width="77" height="21.5" fill="#fff" stroke="#ababab" stroke-width="1" />
<text x="1499.5" y="359.3" font-size="10.5" fill="#444" textLength="37.5" lengthAdjust="spacingAndGlyphs" >8.02 cm</text>
<path d="M1559.5 352.5 L1562 349.8 L1564.500 352.5 Z" fill="#555" />
<path d="M1559.5 359 L1562 361.7 L1564.500 359 Z" fill="#555" />
<rect x="1493.5" y="372.5" width="77" height="21.5" fill="#fff" stroke="#ababab" stroke-width="1" />
<text x="1499.5" y="386.8" font-size="10.5" fill="#444" textLength="16" lengthAdjust="spacingAndGlyphs" >49°</text>
<path d="M1559.5 380.0 L1562 377.3 L1564.500 380.0 Z" fill="#555" />
<path d="M1559.5 386.5 L1562 389.2 L1564.500 386.5 Z" fill="#555" />
<rect x="1493.5" y="400" width="77" height="21.5" fill="#fff" stroke="#ababab" stroke-width="1" />
<text x="1499.5" y="414.3" font-size="10.5" fill="#444" textLength="27" lengthAdjust="spacingAndGlyphs" >100%</text>
<path d="M1559.5 407.5 L1562 404.8 L1564.500 407.5 Z" fill="#555" />
<path d="M1559.5 414 L1562 416.7 L1564.500 414 Z" fill="#555" />
<rect x="1493.5" y="427.5" width="77" height="21.5" fill="#fff" stroke="#ababab" stroke-width="1" />
<text x="1499.5" y="441.8" font-size="10.5" fill="#444" textLength="27" lengthAdjust="spacingAndGlyphs" >100%</text>
<path d="M1559.5 435.0 L1562 432.3 L1564.500 435.0 Z" fill="#555" />
<path d="M1559.5 441.5 L1562 444.2 L1564.500 441.5 Z" fill="#555" />
<rect x="1343.5" y="458.5" width="12" height="12" fill="#fff" stroke="#8a8a8a" stroke-width="1" />
<text x="1362" y="468.3" font-size="12" fill="#444" textLength="59" lengthAdjust="spacingAndGlyphs" >Lock <tspan text-decoration="underline">a</tspan>spec</text>
<text x="1421.5" y="468.3" font-size="12" fill="#444" textLength="33" lengthAdjust="spacingAndGlyphs" >t ratio</text>
<rect x="1343.5" y="485.5" width="12" height="12" fill="#f3f3f3" stroke="#c3c3c3" stroke-width="1" />
<text x="1362" y="494.8" font-size="12" fill="#a6a6a6" textLength="58" lengthAdjust="spacingAndGlyphs" ><tspan text-decoration="underline">R</tspan>elative to</text>
<text x="1424.3" y="494.8" font-size="12" fill="#a6a6a6" textLength="107.5" lengthAdjust="spacingAndGlyphs" >original picture size</text>
<rect x="1343.5" y="512.5" width="12" height="12" fill="#f3f3f3" stroke="#c3c3c3" stroke-width="1" />
<text x="1362" y="521.8" font-size="12" fill="#a6a6a6" textLength="54" lengthAdjust="spacingAndGlyphs" ><tspan text-decoration="underline">B</tspan>est scale</text>
<text x="1419.3" y="521.8" font-size="12" fill="#a6a6a6" textLength="76" lengthAdjust="spacingAndGlyphs" >for slide show</text>
<text x="1353" y="551" font-size="12" fill="#a6a6a6" textLength="58" lengthAdjust="spacingAndGlyphs" >Res<tspan text-decoration="underline">o</tspan>lution</text>
<rect x="1475.5" y="536" width="94.5" height="20" fill="#f1f1f1" />
<text x="1480.6" y="550.4" font-size="11.5" fill="#a6a6a6" textLength="52.4" lengthAdjust="spacingAndGlyphs" >640 x 480</text>
<path d="M1558 544.800 H1565 L1561.5 548.800 Z" fill="#b5b5b5" />
<path d="M1327.5 575.500 L1332.500 580 L1327.500 584.500 Z" fill="none" stroke="#777" stroke-width="1" />
<text x="1343" y="585" font-size="12" fill="#262626" textLength="47.5" lengthAdjust="spacingAndGlyphs" font-weight="bold" >Position</text>
<path d="M1327.5 601.500 L1332.500 606 L1327.500 610.500 Z" fill="none" stroke="#777" stroke-width="1" />
<text x="1343" y="611" font-size="12" fill="#262626" textLength="50.5" lengthAdjust="spacingAndGlyphs" font-weight="bold" >Text Box</text>
<rect x="1082" y="146" width="148.5" height="332.5" fill="#000" opacity="0.22" filter="url(#sh2)"/>
<rect x="1080.5" y="143.5" width="148" height="332.5" fill="#fff" stroke="#c6c6c6" stroke-width="1" />
<rect x="1081" y="144" width="147" height="25.5" fill="#eeeeee" />
<text x="1091" y="161.3" font-size="12" fill="#4a4f57" textLength="79.5" lengthAdjust="spacingAndGlyphs" font-weight="bold" >Order Objects</text>
<rect x="1081" y="272.5" width="147" height="25" fill="#eeeeee" />
<text x="1091" y="289.3" font-size="12" fill="#4a4f57" textLength="83" lengthAdjust="spacingAndGlyphs" font-weight="bold" >Group Objects</text>
<rect x="1081" y="372.5" width="147" height="25" fill="#eeeeee" />
<text x="1091" y="389.4" font-size="12" fill="#4a4f57" textLength="93.5" lengthAdjust="spacingAndGlyphs" font-weight="bold" >Position Objects</text>
<text x="1115" y="189.4" font-size="12" fill="#4a4a4a" textLength="75.5" lengthAdjust="spacingAndGlyphs" >Bring to F<tspan text-decoration="underline">r</tspan>ont</text>
<text x="1115" y="214.6" font-size="12" fill="#4a4a4a" textLength="72" lengthAdjust="spacingAndGlyphs" >Send to Bac<tspan text-decoration="underline">k</tspan></text>
<text x="1115" y="239.7" font-size="12" fill="#4a4a4a" textLength="77" lengthAdjust="spacingAndGlyphs" >Bring <tspan text-decoration="underline">F</tspan>orward</text>
<text x="1115" y="264.8" font-size="12" fill="#4a4a4a" textLength="83.5" lengthAdjust="spacingAndGlyphs" >Send <tspan text-decoration="underline">B</tspan>ackward</text>
<text x="1115" y="314.4" font-size="12" fill="#a8a8a8" textLength="33.5" lengthAdjust="spacingAndGlyphs" ><tspan text-decoration="underline">G</tspan>roup</text>
<text x="1115" y="339.5" font-size="12" fill="#a8a8a8" textLength="47.5" lengthAdjust="spacingAndGlyphs" ><tspan text-decoration="underline">U</tspan>ngroup</text>
<text x="1115" y="364.3" font-size="12" fill="#a8a8a8" textLength="47.5" lengthAdjust="spacingAndGlyphs" >R<tspan text-decoration="underline">e</tspan>group</text>
<text x="1115" y="414.7" font-size="12" fill="#4a4a4a" textLength="28.5" lengthAdjust="spacingAndGlyphs" ><tspan text-decoration="underline">A</tspan>lign</text>
<path d="M1212.5 406.500 L1216.500 410 L1212.500 413.500 Z" fill="#555" />
<rect x="1082" y="423" width="146" height="24.5" fill="#c6c6c6" />
<text x="1115" y="439.8" font-size="12" fill="#262626" textLength="36.5" lengthAdjust="spacingAndGlyphs" >R<tspan text-decoration="underline">o</tspan>tate</text>
<path d="M1212.5 431.500 L1216.500 435 L1212.500 438.500 Z" fill="#444" />
<line x1="1113" y1="449.5" x2="1228" y2="449.5" stroke="#ebebeb" stroke-width="1" />
<text x="1115" y="467.7" font-size="12" fill="#4a4a4a" textLength="88" lengthAdjust="spacingAndGlyphs" >Selection <tspan text-decoration="underline">P</tspan>ane...</text>
<path d="M1087.5 181 V177.500 H1091" fill="none" stroke="#555" stroke-width="1" />
<path d="M1099.5 184.5 V188.500 H1096" fill="none" stroke="#777" stroke-width="1" />
<rect x="1089.5" y="179.5" width="7.5" height="7.5" fill="#efc067" />
<rect x="1088.5" y="203.5" width="10" height="10" fill="#efc067" />
<rect x="1086.5" y="201.5" width="5" height="5" fill="#fff" stroke="#666" stroke-width="1" />
<rect x="1095.5" y="210.5" width="5" height="5" fill="#fff" stroke="#666" stroke-width="1" />
<path d="M1093.5 239.500 H1099.500 V232.500" fill="none" stroke="#777" stroke-width="1" />
<rect x="1086.5" y="226.5" width="11" height="11" fill="#efc067" />
<rect x="1086.5" y="251.5" width="11" height="11" fill="#efc067" />
<rect x="1092.5" y="257.5" width="8" height="8" fill="#fff" stroke="#666" stroke-width="1" />
<g  stroke="#b3a9b8" fill="#f3eef5" stroke-width="1">
<rect x="1087.5" y="304.5" width="7" height="7" fill="none" />
<rect x="1090.5" y="307.5" width="7" height="7" fill="none" />
<path d="M1085.5 303.500 H1088 M1085.5 303.500 V306 M1099.5 303.500 H1097 M1099.5 303.500 V306 M1085.5 316.500 H1088 M1085.5 316.500 V314 M1099.5 316.500 H1097 M1099.5 316.500 V314" fill="none" stroke-dasharray="1.5 1"/>
<rect x="1090.5" y="332.5" width="9" height="9" fill="none" />
<path d="M1087.5 327.500 V337 M1085.5 329.500 H1095" fill="none" />
<rect x="1090.5" y="357.5" width="9" height="9" fill="none" />
<path d="M1087.5 352.500 H1095 M1089 362 A3.500 3.500 0 0 1 1089 356" fill="none" />
</g>
<rect x="1086.5" y="326.5" width="2" height="2" fill="#9a9a9a" />
<rect x="1086.5" y="336" width="2" height="2" fill="#9a9a9a" />
<rect x="1094" y="328.5" width="2" height="2" fill="#9a9a9a" />
<rect x="1086.5" y="351.5" width="2" height="2" fill="#9a9a9a" />
<rect x="1094" y="351.5" width="2" height="2" fill="#9a9a9a" />
<path d="M1088.5 402.500 V417.500 M1088.5 402.500 H1094" fill="none" stroke="#666" stroke-width="1" />
<rect x="1090.5" y="405.5" width="9" height="5.5" fill="#efc067" />
<path d="M1097.5 414.500 H1091 M1093.2 412.3 L1091 414.500 L1093.200 416.700" fill="none" stroke="#3b78c3" stroke-width="1.2" />
<path d="M1093.0 434.0 L1093.0 441.0 H1086.0 Z" fill="#fff" stroke="#aaa" stroke-width="0.9" />
<path d="M1095.0 431.0 V441.0 H1101.0 Z" fill="#5a5a5a" />
<path d="M1087.5 433.5 C1088.0 430.0 1090.5 429.0 1093.5 429.2" fill="none" stroke="#3b78c3" stroke-width="1.2" />
<path d="M1092.0 427.0 L1095.0 429.3 L1092.0 431.5 Z" fill="#3b78c3" />
<rect x="1087.5" y="455.5" width="6" height="5.5" fill="none" stroke="#666" stroke-width="1" />
<rect x="1094" y="456" width="5" height="5" fill="#efc067" />
<rect x="1087.5" y="463.5" width="6" height="6" fill="none" stroke="#666" stroke-width="1" />
<path d="M1096.5 462.500 V472 L1099 469.800 L1100.800 473.500 L1102.300 472.700 L1100.500 469.200 H1103.500 Z" fill="#fff" stroke="#555" stroke-width="0.9" />
<rect x="1230" y="426" width="193.5" height="121.5" fill="#000" opacity="0.22" filter="url(#sh2)"/>
<rect x="1228.5" y="423.5" width="193" height="121" fill="#fff" stroke="#c6c6c6" stroke-width="1" />
<rect x="1229.5" y="520.5" width="191" height="23" fill="#c6c6c6" />
<text x="1261.3" y="441" font-size="12" fill="#4a4a4a" textLength="90" lengthAdjust="spacingAndGlyphs" >Rotate <tspan text-decoration="underline">R</tspan>ight 90°</text>
<text x="1261.3" y="464.4" font-size="12" fill="#4a4a4a" textLength="82" lengthAdjust="spacingAndGlyphs" >Rotate <tspan text-decoration="underline">L</tspan>eft 90°</text>
<text x="1261.3" y="487.5" font-size="12" fill="#4a4a4a" textLength="64" lengthAdjust="spacingAndGlyphs" >Flip <tspan text-decoration="underline">V</tspan>ertical</text>
<text x="1261.3" y="510.7" font-size="12" fill="#4a4a4a" textLength="81" lengthAdjust="spacingAndGlyphs" >Flip <tspan text-decoration="underline">H</tspan>orizontal</text>
<text x="1261.3" y="536.8" font-size="12" fill="#262626" textLength="134.5" lengthAdjust="spacingAndGlyphs" ><tspan text-decoration="underline">M</tspan>ore Rotation Options...</text>
<path d="M1240.0 435.5 L1240.0 442.5 H1233.0 Z" fill="#fff" stroke="#aaa" stroke-width="0.9" />
<path d="M1242.0 432.5 V442.5 H1248.0 Z" fill="#5a5a5a" />
<path d="M1234.5 435 C1235.0 431.5 1237.5 430.5 1240.5 430.7" fill="none" stroke="#3b78c3" stroke-width="1.2" />
<path d="M1239.0 428.5 L1242.0 430.8 L1239.0 433 Z" fill="#3b78c3" />
<path d="M1233 467.500 L1239 455.500 V467.500 Z" fill="#5a5a5a" />
<path d="M1241.5 460.500 V467.500 H1248.500 Z" fill="#fff" stroke="#aaa" stroke-width="0.9" />
<path d="M1247.5 459 C1247 456 1245 455 1242.5 455.200" fill="none" stroke="#3b78c3" stroke-width="1.2" />
<path d="M1244 453 L1241 455.300 L1244 457.500 Z" fill="#3b78c3" />
<path d="M1245.5 477.500 V483.500 H1235.500 Z" fill="#fff" stroke="#aaa" stroke-width="0.9" />
<path d="M1235 485 H1246 V490.500 Z" fill="#5a5a5a" />
<path d="M1234 514.500 L1239.500 502.500 V514.500 Z" fill="#5a5a5a" />
<path d="M1241.5 503.500 L1247 514 H1241.500 Z" fill="#fff" stroke="#aaa" stroke-width="0.9" />
<text x="14.5" y="193.2" font-size="14" fill="#555" >1</text>
<rect x="37" y="184" width="138" height="77.5" fill="#e2bd8e" />
<rect x="37" y="184" width="138" height="77.5" fill="none" stroke="#d6c7b0" stroke-width="0.8" />
<rect x="63" y="201" width="87.5" height="46" fill="#000" opacity="0.3" filter="url(#sh1)"/>
<rect x="62.3" y="200.2" width="87.5" height="46" fill="url(#thumbpaper)" />
<circle cx="64.5" cy="202.5" r="1.1" fill="#9a9a9a" stroke="#777" stroke-width="0.4" />
<circle cx="147.5" cy="202.5" r="1.1" fill="#9a9a9a" stroke="#777" stroke-width="0.4" />
<circle cx="64.5" cy="243.8" r="1.1" fill="#9a9a9a" stroke="#777" stroke-width="0.4" />
<circle cx="147.5" cy="243.8" r="1.1" fill="#9a9a9a" stroke="#777" stroke-width="0.4" />
<text x="106" y="219.8" font-size="7" fill="#222" textLength="40" lengthAdjust="spacingAndGlyphs" text-anchor="middle" font-family='"Liberation Serif", serif' >Flip &amp; Rotate</text>
<line x1="68" y1="224.1" x2="145" y2="224.1" stroke="#c2a77e" stroke-width="0.9" />
<rect x="35.5" y="281.7" width="141.3" height="80.9" fill="#fff" stroke="#c0432a" stroke-width="2.8" />
<rect x="38.2" y="284.3" width="136.5" height="76.6" fill="#e9cea8" />
<rect x="43.2" y="289.6" width="125.7" height="65.1" fill="#fbfbfb" />
<circle cx="45.3" cy="291.8" r="1.1" fill="#9a9a9a" stroke="#777" stroke-width="0.4" />
<circle cx="166.8" cy="291.8" r="1.1" fill="#9a9a9a" stroke="#777" stroke-width="0.4" />
<circle cx="45.3" cy="352.5" r="1.1" fill="#9a9a9a" stroke="#777" stroke-width="0.4" />
<circle cx="166.8" cy="352.5" r="1.1" fill="#9a9a9a" stroke="#777" stroke-width="0.4" />
<line x1="53.9" y1="311.2" x2="159.8" y2="311.2" stroke="#c2a77e" stroke-width="0.9" />
<path d="M84.8 312.9 L105.7 336.1 L86.4 353.5 L65.7 329.1 Z" fill="#000" />
<path d="M122.4 317.5 H145.4 L133.8 338.9 Z" fill="#000" />
<text x="12" y="292.6" font-size="14" fill="#c0432a" >2</text>
<text x="12.5" y="392.3" font-size="14" fill="#555" >3</text>
<rect x="37" y="382.5" width="138" height="78" fill="#e9cea8" />
<rect x="37" y="382.5" width="138" height="78" fill="none" stroke="#d6c7b0" stroke-width="0.8" />
<rect x="42" y="387.5" width="128.3" height="67" fill="#fbfbfb" />
<circle cx="44.2" cy="389.7" r="1.1" fill="#9a9a9a" stroke="#777" stroke-width="0.4" />
<circle cx="168.1" cy="389.7" r="1.1" fill="#9a9a9a" stroke="#777" stroke-width="0.4" />
<circle cx="44.2" cy="452.2" r="1.1" fill="#9a9a9a" stroke="#777" stroke-width="0.4" />
<circle cx="168.1" cy="452.2" r="1.1" fill="#9a9a9a" stroke="#777" stroke-width="0.4" />
<text x="106" y="404.2" font-size="4.2" fill="#333" textLength="27" lengthAdjust="spacingAndGlyphs" font-weight="bold" text-anchor="middle" font-family='"Liberation Serif", serif' >Thank you!</text>
<line x1="54" y1="411.3" x2="160" y2="411.3" stroke="#c2a77e" stroke-width="0.9" />
<text x="8" y="853" font-size="12" fill="#444" textLength="55.5" lengthAdjust="spacingAndGlyphs" >Slide 2 of 3</text>
<g  stroke="#666" fill="none" stroke-width="1">
<path d="M83 843.500 H89.500 V854.500 H83 Z M89.500 845 H92" fill="none" />
<path d="M92 849 L94.500 851.500 L98.500 845.500" fill="none" stroke-width="1.2"/>
<path d="M91.500 848 V854.500 H98 V850" fill="none" />
</g>
<text x="116.5" y="853" font-size="12" fill="#444" textLength="68.5" lengthAdjust="spacingAndGlyphs" >English (India)</text>
<path d="M1077 852.500 H1087 M1077 850 H1087 M1079 847.500 H1085" fill="none" stroke="#666" stroke-width="1" />
<path d="M1079.5 845.500 L1082 843 L1084.500 845.500 Z" fill="#666" />
<text x="1092.5" y="853" font-size="12" fill="#444" textLength="29.5" lengthAdjust="spacingAndGlyphs" >Notes</text>
<path d="M1143.5 843.500 H1157.500 V852.500 H1150 L1147 855.500 V852.500 H1143.500 Z" fill="#555" />
<text x="1160" y="853" font-size="12" fill="#444" textLength="52.5" lengthAdjust="spacingAndGlyphs" >Comments</text>
<rect x="1232.5" y="839" width="41.5" height="22" fill="#c8c8c8" />
<g  stroke="#555" fill="none" stroke-width="1">
<rect x="1245.5" y="842.5" width="14" height="12" fill="none" />
<path d="M1249.5 842.500 V854.500 M1249.5 851.500 H1259.500" fill="none" stroke-width="0.9"/>
<rect x="1251.5" y="844.5" width="6" height="4" fill="none" stroke="#777"/>
<rect x="1288.5" y="843.5" width="5" height="4" fill="none" />
<rect x="1296.5" y="843.5" width="5" height="4" fill="none" />
<rect x="1288.5" y="850.5" width="5" height="4" fill="none" />
<rect x="1296.5" y="850.5" width="5" height="4" fill="none" />
<path d="M1329.5 844.500 C1332 843.500 1335 843.500 1336.500 845 C1338 843.500 1341 843.500 1343.500 844.500 V853.500 C1341 852.500 1338 852.500 1336.500 854 C1335 852.500 1332 852.500 1329.500 853.500 Z M1336.500 845 V854" fill="none" />
<path d="M1331.5 847 H1334.500 M1331.5 849 H1334.500 M1338.5 847 H1341.500 M1338.5 849 H1341.500" fill="none" stroke-width="0.7"/>
<path d="M1371.5 843.500 H1386.500 M1373 843.500 V851.500 H1385 V843.500 M1379 851.500 V855.500 M1376 855.500 H1382" fill="none" />
<line x1="1405.5" y1="849.5" x2="1413" y2="849.5" stroke="#555" stroke-width="1" />
<line x1="1419" y1="849.5" x2="1522.5" y2="849.5" stroke="#8a8a8a" stroke-width="1" />
<line x1="1470.5" y1="846.5" x2="1470.5" y2="852.5" stroke="#8a8a8a" stroke-width="1" />
<path d="M1527.5 849.500 H1536.500 M1532 845 V854" fill="none" />
<rect x="1586.5" y="843.5" width="10" height="10" fill="none" />
</g>
<path d="M1588.5 847.500 V845.500 H1590.500 M1592.5 845.500 H1594.500 V847.500 M1594.5 849.500 V851.500 H1592.500 M1590.5 851.500 H1588.500 V849.500" fill="none" stroke="#555" stroke-width="1" />
<rect x="1458.5" y="843" width="3.5" height="13" fill="#444" />
<text x="1550" y="853" font-size="11" fill="#444" textLength="20" lengthAdjust="spacingAndGlyphs" >80%</text>
</svg>
</body></html>
